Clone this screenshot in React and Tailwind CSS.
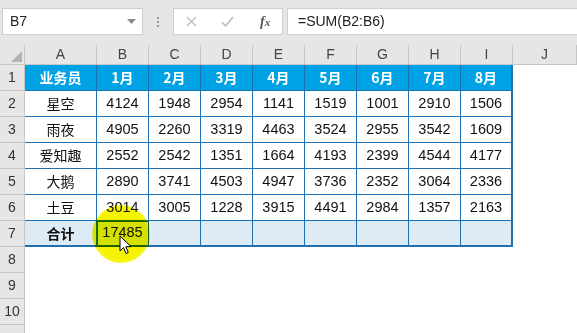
import React from 'react';

const COLS = ['A', 'B', 'C', 'D', 'E', 'F', 'G', 'H', 'I', 'J'];
const WIDTHS = ['w-[72px]', 'w-[52px]', 'w-[52px]', 'w-[52px]', 'w-[52px]', 'w-[52px]', 'w-[52px]', 'w-[52px]', 'w-[52px]', 'flex-1'];

const HEAD = ['业务员', '1月', '2月', '3月', '4月', '5月', '6月', '7月', '8月'];
const ROWS = [
  ['星空', 4124, 1948, 2954, 1141, 1519, 1001, 2910, 1506],
  ['雨夜', 4905, 2260, 3319, 4463, 3524, 2955, 3542, 1609],
  ['爱知趣', 2552, 2542, 1351, 1664, 4193, 2399, 4544, 4177],
  ['大鹅', 2890, 3741, 4503, 4947, 3736, 2352, 3064, 2336],
  ['土豆', 3014, 3005, 1228, 3915, 4491, 2984, 1357, 2163],
];
const TOTAL = ['合计', 17485, '', '', '', '', '', '', ''];

const num = { fontFamily: '"Liberation Sans", Arial, sans-serif' };
const cjk = { fontFamily: '"Noto Sans CJK SC", "Liberation Sans", sans-serif' };

function RowHead({ n }) {
  return (
    <div className="w-[25px] shrink-0 h-full bg-[#e6e6e6] border-r border-b border-[#c6c6c6] flex items-end justify-center pb-[2px] text-[14px] text-[#333]" style={num}>
      {n}
    </div>
  );
}

function TableRow({ n, cells, kind }) {
  const bg = kind === 'head' ? 'bg-[#00a2e6]' : kind === 'total' ? 'bg-[#ddebf7]' : 'bg-white';
  return (
    <div className="flex h-[26px]">
      <RowHead n={n} />
      {cells.map((c, i) => {
        const isText = typeof c === 'string' && i === 0;
        const last = i === cells.length - 1;
        return (
          <div
            key={i}
            className={`${WIDTHS[i]} shrink-0 h-full flex items-center justify-center ${bg} border-b border-r border-[#1f6fb3] ${last ? 'border-r-2' : ''} ${kind === 'total' ? 'border-b-2' : ''} ${kind === 'head' ? 'text-white font-bold' : 'text-[#111]'} ${kind === 'total' && i === 0 ? 'font-bold' : ''} ${kind === 'total' && i === 1 ? 'text-[#1c2f8a] outline outline-1 outline-[#1f5f2f] -outline-offset-1' : ''}`}
            style={kind === 'head' || isText ? { ...cjk, fontSize: 14 } : { ...num, fontSize: 14.5 }}
          >
            {c}
          </div>
        );
      })}
      <div className="flex-1 h-full bg-white" />
    </div>
  );
}

function EmptyRow({ n }) {
  return (
    <div className="flex h-[26px]">
      <RowHead n={n} />
      <div className="flex-1 h-full bg-white" />
    </div>
  );
}

export default function App() {
  return (
    <div className="relative w-[577px] h-[333px] overflow-hidden bg-white select-none">
      {/* formula bar */}
      <div className="h-[45px] bg-[#e6e6e6] flex items-start pt-[8px]">
        <div className="ml-[2px] w-[141px] h-[27px] bg-white border border-[#cfcfcf] flex items-center pl-[7px] pr-[6px] text-[14px] text-[#222]" style={num}>
          <span className="flex-1">B7</span>
          <svg width="9" height="5" viewBox="0 0 9 5"><path d="M0 0h9L4.5 5z" fill="#8a8a8a" /></svg>
        </div>
        <div className="w-[30px] h-[27px] flex flex-col items-center justify-center gap-[2px]">
          <span className="w-[2px] h-[2px] bg-[#9a9a9a]" />
          <span className="w-[2px] h-[2px] bg-[#9a9a9a]" />
          <span className="w-[2px] h-[2px] bg-[#9a9a9a]" />
        </div>
        <div className="w-[110px] h-[27px] bg-white border border-[#cfcfcf] flex items-center">
          <svg className="ml-[12px]" width="11" height="11" viewBox="0 0 11 11"><path d="M1 1l9 9M10 1l-9 9" stroke="#bdbdbd" strokeWidth="1.3" /></svg>
          <svg className="ml-[24px]" width="13" height="11" viewBox="0 0 13 11"><path d="M1 6l3.5 4L12 1" stroke="#bdbdbd" strokeWidth="1.6" fill="none" /></svg>
          <span className="ml-[26px] text-[14px] italic font-bold text-[#555]" style={{ fontFamily: '"Liberation Serif", serif' }}>f<span className="text-[11px]">x</span></span>
        </div>
        <div className="ml-[4px] flex-1 h-[27px] bg-white border border-[#cfcfcf] border-r-0 flex items-center pl-[10px] text-[14px] text-[#222]" style={num}>
          =SUM(B2:B6)
        </div>
      </div>

      {/* column headers */}
      <div className="flex h-[20px] bg-[#e6e6e6] border-b border-[#c6c6c6]">
        <div className="w-[25px] shrink-0 h-full border-r border-[#c6c6c6] flex items-end justify-end p-[2px]">
          <svg width="11" height="11" viewBox="0 0 11 11"><path d="M11 0v11H0z" fill="#b3b3b3" /></svg>
        </div>
        {COLS.map((c, i) => (
          <div key={c} className={`${WIDTHS[i]} shrink-0 h-full border-r border-[#c6c6c6] flex items-center justify-center text-[14px] text-[#444]`} style={num}>
            {c}
          </div>
        ))}
      </div>

      <TableRow n={1} cells={HEAD} kind="head" />
      {ROWS.map((r, i) => (
        <TableRow key={i} n={i + 2} cells={r} kind="data" />
      ))}
      <TableRow n={7} cells={TOTAL} kind="total" />
      <EmptyRow n={8} />
      <EmptyRow n={9} />
      <EmptyRow n={10} />
      <EmptyRow n="" />

      {/* click highlight */}
      <div className="absolute left-[92px] top-[205px] w-[58px] h-[58px] rounded-full bg-[radial-gradient(circle,#f4f400_62%,rgba(244,244,0,0.6)_80%,rgba(244,244,0,0)_100%)] mix-blend-multiply pointer-events-none" />
      {/* cursor */}
      <svg className="absolute left-[119px] top-[235px] pointer-events-none" width="14" height="21" viewBox="0 0 14 21">
        <path d="M1 1v15l3.5-3.5 2.5 6 2.3-1-2.5-5.8H12z" fill="#fff" stroke="#000" strokeWidth="1" strokeLinejoin="round" />
      </svg>
    </div>
  );
}
